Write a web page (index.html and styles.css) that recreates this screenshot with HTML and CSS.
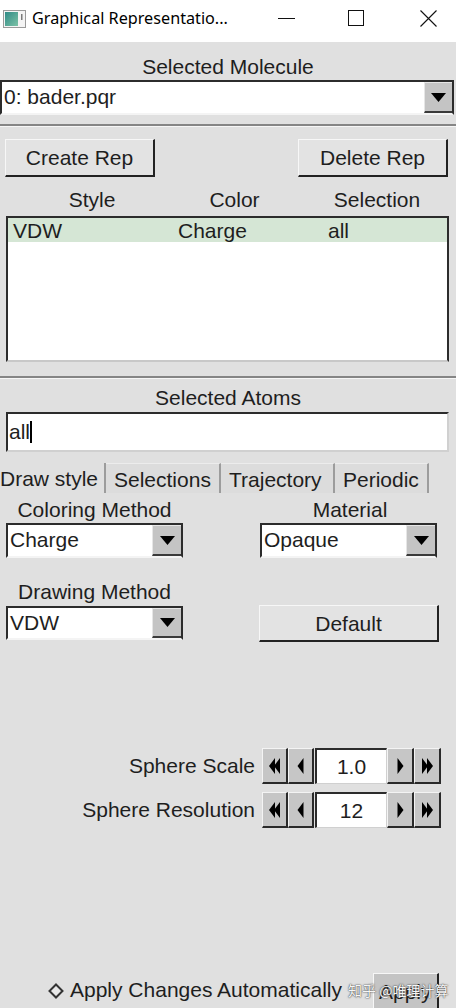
FILE: index.html
```html
<!DOCTYPE html>
<html>
<head>
<meta charset="utf-8">
<link rel="stylesheet" href="styles.css">
</head>
<body>
<div class="titlebar">
  <svg class="appicon" width="23" height="18" viewBox="0 0 23 18">
    <rect x="0.5" y="0.5" width="22" height="17" fill="#f4f4f4" stroke="#9a9a9a"/>
    <defs><linearGradient id="g" x1="0" y1="0" x2="1" y2="1"><stop offset="0" stop-color="#2f8a86"/><stop offset="1" stop-color="#7cc2a6"/></linearGradient></defs>
    <rect x="2" y="2" width="13" height="14" fill="url(#g)"/>
    <rect x="18" y="4" width="1.5" height="6" fill="#7a7a7a"/>
  </svg>
  <span class="title">Graphical Representatio...</span>
  <div class="winctl">
    <svg class="ctl-min" width="17" height="17" viewBox="0 0 17 17"><line x1="0" y1="8.5" x2="17" y2="8.5" stroke="#111" stroke-width="1"/></svg>
    <svg class="ctl-max" width="16" height="16" viewBox="0 0 16 16"><rect x="0.5" y="0.5" width="15" height="15" fill="none" stroke="#111" stroke-width="1"/></svg>
    <svg class="ctl-close" width="17" height="17" viewBox="0 0 17 17"><path d="M0.5 0.5 L16.5 16.5 M16.5 0.5 L0.5 16.5" stroke="#111" stroke-width="1.1"/></svg>
  </div>
</div>

<main class="app">
  <section class="mol">
    <div class="label">Selected Molecule</div>
    <div class="combo combo-wide">
      <span class="combo-text">0: bader.pqr</span>
      <span class="combo-btn"><svg width="15" height="9" viewBox="0 0 15 9"><polygon points="0,0 15,0 7.5,9" fill="#000"/></svg></span>
    </div>
  </section>

  <div class="sep"></div>

  <section class="reps">
    <div class="btnrow">
      <div class="btn btn-rep">Create Rep</div>
      <div class="btn btn-rep">Delete Rep</div>
    </div>
    <div class="cols">
      <span>Style</span><span>Color</span><span>Selection</span>
    </div>
    <div class="listbox">
      <div class="lrow lrow-sel"><span>VDW</span><span>Charge</span><span>all</span></div>
    </div>
  </section>

  <div class="sep sep2"></div>

  <section class="atoms">
    <div class="label label-atoms">Selected Atoms</div>
    <div class="entry"><span>all</span><span class="caret"></span></div>
  </section>

  <nav class="tabs">
    <span class="tab tab-active">Draw style</span>
    <span class="tab">Selections</span>
    <span class="tab">Trajectory</span>
    <span class="tab">Periodic</span>
  </nav>

  <section class="draw">
    <div class="field">
      <div class="label">Coloring Method</div>
      <div class="combo combo-sm">
        <span class="combo-text">Charge</span>
        <span class="combo-btn"><svg width="15" height="9" viewBox="0 0 15 9"><polygon points="0,0 15,0 7.5,9" fill="#000"/></svg></span>
      </div>
    </div>
    <div class="field">
      <div class="label">Material</div>
      <div class="combo combo-sm">
        <span class="combo-text">Opaque</span>
        <span class="combo-btn"><svg width="15" height="9" viewBox="0 0 15 9"><polygon points="0,0 15,0 7.5,9" fill="#000"/></svg></span>
      </div>
    </div>
    <div class="field field-row2">
      <div class="label">Drawing Method</div>
      <div class="combo combo-sm combo-draw">
        <span class="combo-text">VDW</span>
        <span class="combo-btn"><svg width="15" height="9" viewBox="0 0 15 9"><polygon points="0,0 15,0 7.5,9" fill="#000"/></svg></span>
      </div>
    </div>
    <div class="field field-row2 field-default">
      <div class="btn btn-default">Default</div>
    </div>
  </section>

  <section class="spins">
    <div class="spin">
      <span class="spin-label">Sphere Scale</span>
      <span class="sbtn"><svg width="12" height="18" viewBox="0 0 12 18"><polygon points="0,9 6,1 6,17" fill="#000"/><polygon points="5,9 11,1 11,17" fill="#000"/></svg></span>
      <span class="sbtn"><svg width="7" height="18" viewBox="0 0 7 18"><polygon points="0.5,9 6.5,1 6.5,17" fill="#000"/></svg></span>
      <span class="sval">1.0</span>
      <span class="sbtn sbtn-r"><svg width="7" height="18" viewBox="0 0 7 18"><polygon points="6.5,9 0.5,1 0.5,17" fill="#000"/></svg></span>
      <span class="sbtn sbtn-r"><svg width="12" height="18" viewBox="0 0 12 18"><polygon points="12,9 6,1 6,17" fill="#000"/><polygon points="7,9 1,1 1,17" fill="#000"/></svg></span>
    </div>
    <div class="spin spin2">
      <span class="spin-label">Sphere Resolution</span>
      <span class="sbtn"><svg width="12" height="18" viewBox="0 0 12 18"><polygon points="0,9 6,1 6,17" fill="#000"/><polygon points="5,9 11,1 11,17" fill="#000"/></svg></span>
      <span class="sbtn"><svg width="7" height="18" viewBox="0 0 7 18"><polygon points="0.5,9 6.5,1 6.5,17" fill="#000"/></svg></span>
      <span class="sval">12</span>
      <span class="sbtn sbtn-r"><svg width="7" height="18" viewBox="0 0 7 18"><polygon points="6.5,9 0.5,1 0.5,17" fill="#000"/></svg></span>
      <span class="sbtn sbtn-r"><svg width="12" height="18" viewBox="0 0 12 18"><polygon points="12,9 6,1 6,17" fill="#000"/><polygon points="7,9 1,1 1,17" fill="#000"/></svg></span>
    </div>
  </section>

  <footer class="bottom">
    <svg class="diamond" width="16" height="16" viewBox="0 0 16 16"><polygon points="8,1.5 14.5,8 8,14.5 1.5,8" fill="#e8e8e8" stroke="#333" stroke-width="2"/></svg>
    <span class="auto">Apply Changes Automatically</span>
    <div class="btn btn-apply">Apply</div>
    <span class="watermark">知乎 @唯理计算</span>
  </footer>
</main>
</body>
</html>
```

FILE: styles.css
```css
* { box-sizing: border-box; }
html, body { margin: 0; padding: 0; }
body {
  width: 456px;
  height: 1008px;
  overflow: hidden;
  background: #e0e0e0;
  font-family: "Liberation Sans", Arial, sans-serif;
  font-size: 21px;
  color: #1e1e1e;
}

/* title bar */
.titlebar {
  height: 42px;
  background: #ffffff;
  display: flex;
  align-items: flex-start;
}
.appicon { margin: 10px 0 0 3px; flex: none; }
.title {
  margin: 6px 0 0 6px;
  font-family: "Noto Sans", "Open Sans", sans-serif;
  font-size: 16.2px;
  line-height: 24px;
  color: #000;
  white-space: nowrap;
}
.winctl {
  margin-left: auto;
  display: flex;
  align-items: flex-start;
  padding-right: 19px;
}
.ctl-min { margin-top: 10px; margin-right: 53px; }
.ctl-max { margin-top: 10px; margin-right: 56px; }
.ctl-close { margin-top: 10px; }

/* main */
.app {
  height: 966px;
  display: flex;
  flex-direction: column;
  padding-top: 13px;
  position: relative;
}
.label {
  line-height: 24px;
  text-align: center;
  white-space: nowrap;
}

/* combo */
.combo {
  display: flex;
  background: #fff;
  border-top: 2px solid #2c2c2c;
  border-left: 2px solid #2c2c2c;
  border-right: 2px solid #2c2c2c;
  border-bottom: 2px solid #f4f4f4;
}
.combo-text {
  flex: 1;
  padding-left: 2px;
  line-height: 30px;
  white-space: nowrap;
}
.combo-btn {
  width: 28px;
  background: #c4c4c4;
  border-top: 1px solid #e6e6e6;
  border-left: 1px solid #e6e6e6;
  border-bottom: 2px solid #3a3a3a;
  display: flex;
  align-items: center;
  justify-content: center;
}
.combo-wide {
  margin-top: 1px;
  width: 454px;
  height: 35px;
}

.sep {
  margin-top: 9px;
  height: 3px;
  border-top: 2px solid #858585;
  border-bottom: 1px solid #f6f6f6;
}
.sep2 { margin-top: 14px; }

/* buttons */
.btn {
  background: #e3e3e3;
  border-top: 1px solid #f7f7f7;
  border-left: 1px solid #f7f7f7;
  border-right: 2px solid #222;
  border-bottom: 2px solid #222;
  text-align: center;
  white-space: nowrap;
}
.btnrow {
  margin-top: 12px;
  display: flex;
  justify-content: space-between;
  padding: 0 8px 0 5px;
}
.btn-rep {
  width: 150px;
  height: 38px;
  line-height: 35px;
}

.cols {
  margin-top: 12px;
  margin-left: 42px;
  display: grid;
  grid-template-columns: 100px 100px 100px;
  column-gap: 42.5px;
  line-height: 22px;
  text-align: center;
}

.listbox {
  margin: 5px 7px 0 6px;
  height: 146px;
  background: #fff;
  border-top: 2px solid #2c2c2c;
  border-left: 2px solid #2c2c2c;
  border-right: 2px solid #2c2c2c;
  border-bottom: 2px solid #c8c8c8;
}
.lrow {
  display: grid;
  grid-template-columns: 165px 150px 1fr;
  padding-left: 5px;
  height: 24px;
  line-height: 25px;
}
.lrow-sel { background: #d5e6d5; }

/* atoms */
.label-atoms { margin-top: 7px; }
.entry {
  margin: 2px 7px 0 6px;
  height: 40px;
  background: #fff;
  border-top: 2px solid #2c2c2c;
  border-left: 2px solid #2c2c2c;
  border-right: 2px solid #d0d0d0;
  border-bottom: 2px solid #d0d0d0;
  display: flex;
  align-items: center;
  padding-left: 1px;
}
.caret {
  width: 2px;
  height: 22px;
  background: #000;
  margin-left: 0;
}

/* tabs */
.tabs {
  margin-top: 11px;
  height: 30px;
  display: flex;
}
.tab {
  height: 30px;
  line-height: 31px;
  padding: 0 7px 0 8px;
  border-right: 2px solid #9c9c9c;
  white-space: nowrap;
  background: #dcdcdc;
  border-top: 1px solid #ececec;
}
.tab-active {
  padding-left: 0;
  width: 106px;
  background: #e0e0e0;
  border-top: none;
}
.tab:nth-child(2) { width: 115px; }
.tab:nth-child(3) { width: 114px; }
.tab:nth-child(4) { width: 94px; }

/* draw style */
.draw {
  margin-top: 5px;
  display: grid;
  grid-template-columns: 177px 180px;
  column-gap: 77px;
  padding-left: 6px;
  row-gap: 22px;
}
.field { display: flex; flex-direction: column; }
.combo-sm {
  margin-top: 1px;
  height: 35px;
  width: 177px;
}
.combo-sm .combo-btn { width: 29px; }
.field-default { justify-content: flex-end; }
.combo-draw { margin-top: 2px; height: 34px; }
.btn-default {
  width: 180px;
  height: 37px;
  line-height: 35px;
  margin-left: -1px;
  margin-bottom: -2px;
}

/* spinners */
.spins {
  margin-top: 108px;
  display: flex;
  flex-direction: column;
  gap: 8px;
  padding-right: 15px;
}
.spin {
  display: flex;
  justify-content: flex-end;
  align-items: stretch;
  height: 36px;
}
.spin-label {
  line-height: 36px;
  margin-right: 7px;
  white-space: nowrap;
}
.sbtn {
  width: 26px;
  background: #c6c6c6;
  border-top: 1px solid #f4f4f4;
  border-left: 1px solid #f4f4f4;
  border-right: 2px solid #2a2a2a;
  border-bottom: 2px solid #2a2a2a;
  display: flex;
  align-items: center;
  justify-content: center;
}
.sbtn-r { width: 27px; }
.sval {
  width: 72px;
  margin-left: 1px;
  background: #fff;
  border-top: 2px solid #2c2c2c;
  border-left: 2px solid #2c2c2c;
  border-right: 1px solid #d0d0d0;
  border-bottom: 1px solid #d0d0d0;
  text-align: center;
  line-height: 33px;
}

/* bottom */
.bottom {
  margin-top: 145px;
  display: flex;
  align-items: flex-start;
  position: relative;
  height: 40px;
}
.diamond { margin: 10px 0 0 48px; flex: none; }
.auto {
  margin: 5px 0 0 6px;
  line-height: 24px;
  white-space: nowrap;
}
.btn-apply {
  margin-left: 31px;
  width: 66px;
  height: 42px;
  background: #c4c4c4;
  line-height: 36px;
  text-align: left;
  padding-left: 5px;
}
.watermark {
  position: absolute;
  left: 348px;
  top: 8px;
  font-family: "Noto Sans CJK SC", sans-serif;
  font-size: 14px;
  line-height: 18px;
  color: #f6f6f6;
  text-shadow: 0 0 2px #444, 0 0 1px #444;
  white-space: nowrap;
}
```
